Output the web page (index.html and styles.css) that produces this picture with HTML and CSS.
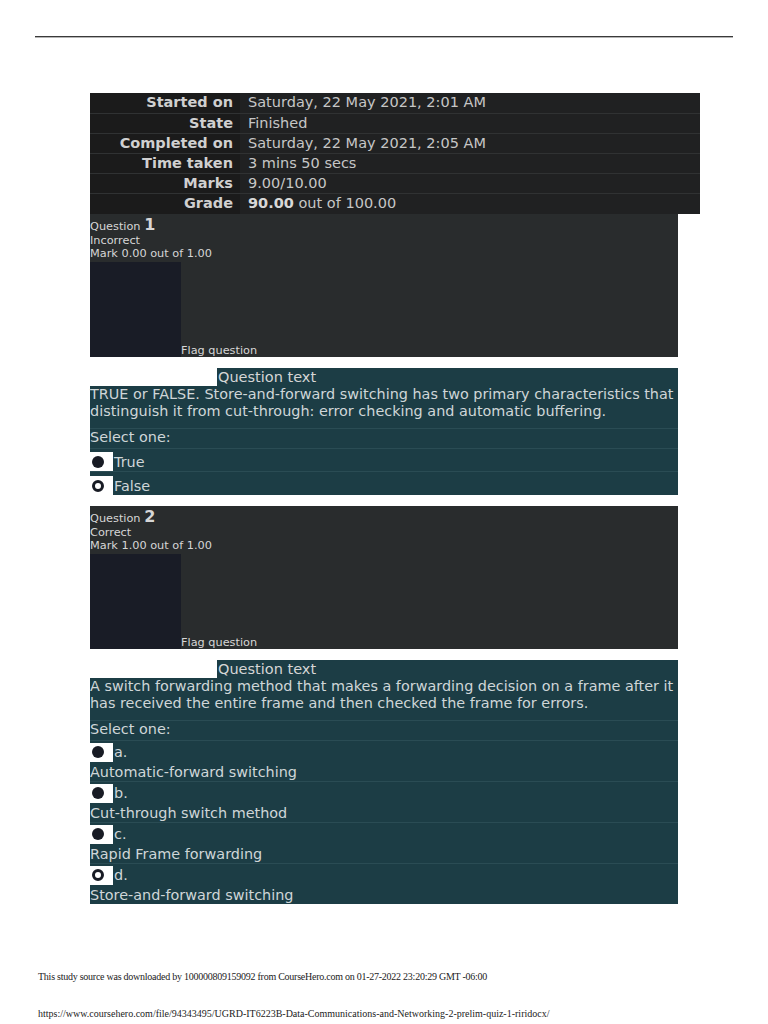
FILE: index.html
```html
<!DOCTYPE html>
<html>
<head>
<meta charset="utf-8">
<link rel="stylesheet" href="styles.css">
</head>
<body>
<div class="topline"></div>
<main class="page">
  <table class="summary">
    <tr><th>Started on</th><td>Saturday, 22 May 2021, 2:01 AM</td></tr>
    <tr><th>State</th><td>Finished</td></tr>
    <tr><th>Completed on</th><td>Saturday, 22 May 2021, 2:05 AM</td></tr>
    <tr><th>Time taken</th><td>3 mins 50 secs</td></tr>
    <tr><th>Marks</th><td>9.00/10.00</td></tr>
    <tr class="last"><th>Grade</th><td><b>90.00</b> out of 100.00</td></tr>
  </table>

  <section class="qinfo">
    <div class="qno">Question <span class="num">1</span></div>
    <div class="state">Incorrect</div>
    <div class="grade">Mark 0.00 out of 1.00</div>
    <div class="flagrow"><span class="thumb"></span><span class="flag">Flag question</span></div>
  </section>
  <div class="qlabel-wrap"><span class="qlabel">Question text</span></div>
  <section class="qtext">
    <p class="prompt">TRUE or FALSE. Store-and-forward switching has two primary characteristics that distinguish it from cut-through: error checking and automatic buffering.</p>
    <div class="select">Select one:</div>
    <div class="opt tf"><span class="radio"><span class="dot"></span></span>True</div>
    <div class="opt tf"><span class="radio"><span class="dot ring"></span></span>False</div>
  </section>

  <section class="qinfo">
    <div class="qno">Question <span class="num">2</span></div>
    <div class="state">Correct</div>
    <div class="grade">Mark 1.00 out of 1.00</div>
    <div class="flagrow"><span class="thumb"></span><span class="flag">Flag question</span></div>
  </section>
  <div class="qlabel-wrap"><span class="qlabel">Question text</span></div>
  <section class="qtext">
    <p class="prompt">A switch forwarding method that makes a forwarding decision on a frame after it has received the entire frame and then checked the frame for errors.</p>
    <div class="select">Select one:</div>
    <div class="opt mc"><div class="letter"><span class="radio"><span class="dot"></span></span>a.</div><div class="ans">Automatic-forward switching</div></div>
    <div class="opt mc"><div class="letter"><span class="radio"><span class="dot"></span></span>b.</div><div class="ans">Cut-through switch method</div></div>
    <div class="opt mc"><div class="letter"><span class="radio"><span class="dot"></span></span>c.</div><div class="ans">Rapid Frame forwarding</div></div>
    <div class="opt mc"><div class="letter"><span class="radio"><span class="dot ring"></span></span>d.</div><div class="ans">Store-and-forward switching</div></div>
  </section>
</main>
<footer class="foot">
  <p class="src">This study source was downloaded by 100000809159092 from CourseHero.com on 01-27-2022 23:20:29 GMT -06:00</p>
  <p class="url">https://www.coursehero.com/file/94343495/UGRD-IT6223B-Data-Communications-and-Networking-2-prelim-quiz-1-riridocx/</p>
</footer>
</body>
</html>
```

FILE: styles.css
```css
* { box-sizing: border-box; }
html, body { margin: 0; padding: 0; background: #fff; }
body { font-family: "DejaVu Sans", sans-serif; color: #d4d4d4; height: 1024px; overflow: hidden; }

.topline {
  margin: 36px 35px 0 35px;
  height: 2px;
  border-top: 1px solid #3a3a3a;
  border-bottom: 1px solid #b5b5b5;
}

.page { margin: 55px 0 0 90px; width: 610px; }

.summary {
  width: 610px;
  border-collapse: collapse;
  background: #1e1e1e;
  font-size: 14.5px;
}
.summary tr { height: 20px; border-bottom: 1px solid #303233; }
.summary tr.last { height: 21px; border-bottom: none; }
.summary th {
  width: 150px;
  text-align: right;
  font-weight: bold;
  padding: 0 7px 0 0;
  background: #1b1b1b;
  color: #d0d0d0;
  line-height: 19px;
}
.summary td { padding: 0 0 0 8px; background: #202122; line-height: 19px; color: #c6c6c6; }
.summary td b { color: #d8d8d8; }

.qinfo {
  width: 588px;
  background: #292c2d;
  font-size: 11.3px;
  line-height: 13px;
  padding-top: 5px;
  color: #d6d6d6;
}
.qno { height: 15px; line-height: 15px; overflow: visible; }
.qno .num { font-size: 16px; font-weight: bold; line-height: 10px; }
.flagrow { display: flex; align-items: flex-end; margin-top: 2px; }
.thumb { width: 91px; height: 95px; background: #191c26; }
.flag { line-height: 13px; }

.qlabel-wrap { width: 588px; margin-top: 11px; padding-left: 127px; height: 18px; }
.qlabel {
  display: block;
  background: #1c3d45;
  font-size: 14.5px;
  line-height: 18px;
  height: 18px;
  padding-left: 1px;
  color: #d6d6d6;
}

.qtext {
  width: 588px;
  background: #1c3d45;
  font-size: 14.4px;
  color: #cfd6d8;
  margin-bottom: 11px;
}
.prompt { margin: 0; line-height: 17px; padding-bottom: 8px; border-bottom: 1px solid #2a4c54; }
.select { line-height: 17px; padding-bottom: 2px; border-bottom: 1px solid #2a4c54; }
.opt { border-bottom: 1px solid #2a4c54; }
.opt:last-child { border-bottom: none; }
.tf { display: flex; align-items: flex-end; height: 23px; line-height: 17px; }
.radio {
  display: inline-flex;
  align-items: center;
  width: 23px;
  height: 19px;
  background: #fff;
  padding-left: 2px;
  margin-right: 1px;
  flex: none;
}
.dot { width: 12px; height: 12px; border-radius: 50%; background: #181b24; }
.dot.ring { background: #fff; border: 3px solid #181b24; }
.mc .letter { display: flex; align-items: center; height: 22px; line-height: 17px; }
.mc .ans { line-height: 18px; }

.foot { font-family: "Liberation Serif", serif; font-size: 10px; line-height: 12px; color: #222; margin: 67px 0 0 38px; }
.foot p { margin: 0; }
.foot .src { letter-spacing: -0.25px; }
.foot .url { margin-top: 25px; }
```
